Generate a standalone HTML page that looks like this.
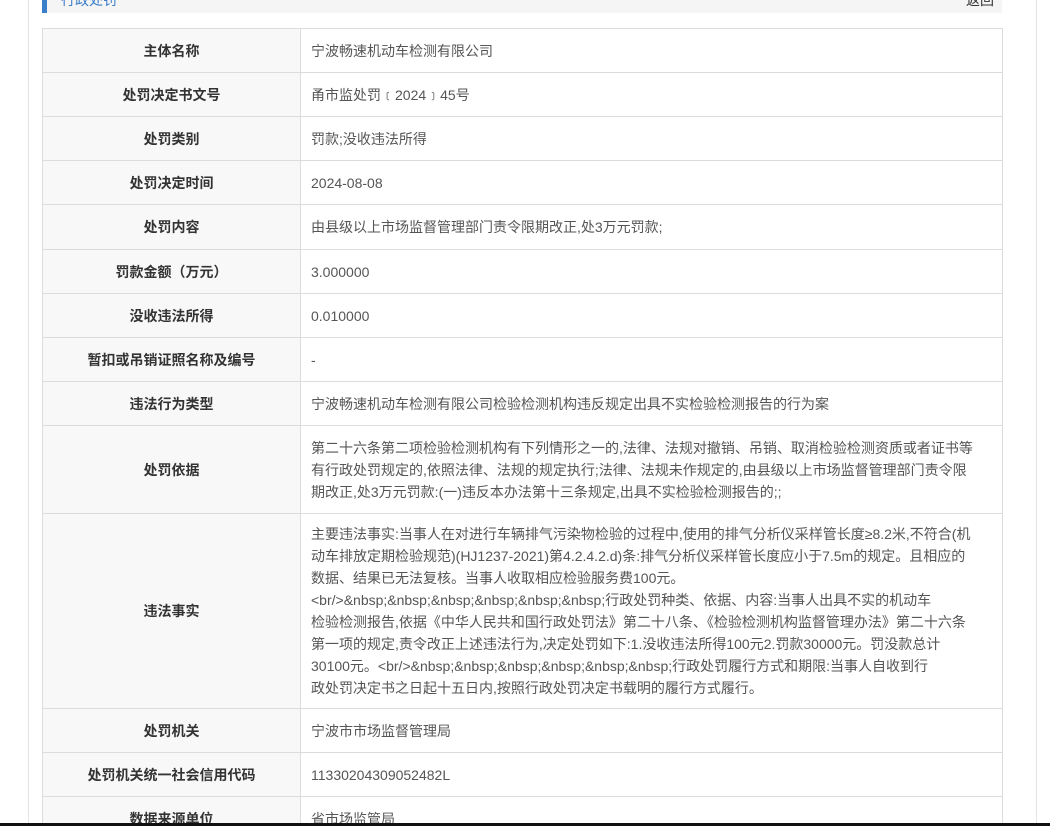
<!DOCTYPE html>
<html><head><meta charset="utf-8"><style>
html,body{margin:0;padding:0;background:#fff;width:1063px;height:826px;overflow:hidden;position:relative}
body{font-family:"Liberation Sans","Noto Sans CJK SC",sans-serif;font-size:14px}
.wrap{position:absolute;left:28px;top:-2px;width:1007px;height:830px;border-left:1px solid #e4e4e4;border-right:1px solid #e4e4e4}
.hd{position:absolute;left:42px;top:0;width:960px;height:13px;background:#f5f5f5;border-left:5px solid #3a7dc9;box-sizing:border-box}
.hd .t{position:absolute;left:14px;top:-10px;color:#3a7dc9;font-size:14px}
.hd .r{position:absolute;right:8px;top:-10px;color:#333;font-size:14px}
table{position:absolute;left:42px;top:28px;width:961px;border-collapse:collapse;table-layout:fixed}
td{border:1px solid #dcdcdc;padding:0 10px;color:#555;line-height:22px;box-sizing:border-box;overflow:hidden}
td.l{width:258px;background:#f8f8f9;text-align:center;font-weight:bold;color:#333;padding:0}
td div{white-space:nowrap}
.bar{position:absolute;left:0;top:823px;width:1050px;height:3px;background:#111}
</style></head><body>
<div class="wrap"></div>
<div class="hd"><span class="t">行政处罚</span><span class="r">返回</span></div>
<table>
<tr style="height:44px"><td class="l">主体名称</td><td>宁波畅速机动车检测有限公司</td></tr>
<tr style="height:44px"><td class="l">处罚决定书文号</td><td>甬市监处罚﹝2024﹞45号</td></tr>
<tr style="height:44px"><td class="l">处罚类别</td><td>罚款;没收违法所得</td></tr>
<tr style="height:44px"><td class="l">处罚决定时间</td><td>2024-08-08</td></tr>
<tr style="height:45px"><td class="l">处罚内容</td><td>由县级以上市场监督管理部门责令限期改正,处3万元罚款;</td></tr>
<tr style="height:44px"><td class="l">罚款金额（万元）</td><td>3.000000</td></tr>
<tr style="height:44px"><td class="l">没收违法所得</td><td>0.010000</td></tr>
<tr style="height:44px"><td class="l">暂扣或吊销证照名称及编号</td><td>-</td></tr>
<tr style="height:44px"><td class="l">违法行为类型</td><td>宁波畅速机动车检测有限公司检验检测机构违反规定出具不实检验检测报告的行为案</td></tr>
<tr style="height:88px"><td class="l">处罚依据</td><td><div>第二十六条第二项检验检测机构有下列情形之一的,法律、法规对撤销、吊销、取消检验检测资质或者证书等</div><div>有行政处罚规定的,依照法律、法规的规定执行;法律、法规未作规定的,由县级以上市场监督管理部门责令限</div><div>期改正,处3万元罚款:(一)违反本办法第十三条规定,出具不实检验检测报告的;;</div></td></tr>
<tr style="height:195px"><td class="l">违法事实</td><td><div>主要违法事实:当事人在对进行车辆排气污染物检验的过程中,使用的排气分析仪采样管长度≥8.2米,不符合(机</div><div>动车排放定期检验规范)(HJ1237-2021)第4.2.4.2.d)条:排气分析仪采样管长度应小于7.5m的规定。且相应的</div><div>数据、结果已无法复核。当事人收取相应检验服务费100元。</div><div>&lt;br/&gt;&amp;nbsp;&amp;nbsp;&amp;nbsp;&amp;nbsp;&amp;nbsp;&amp;nbsp;行政处罚种类、依据、内容:当事人出具不实的机动车</div><div>检验检测报告,依据《中华人民共和国行政处罚法》第二十八条、《检验检测机构监督管理办法》第二十六条</div><div>第一项的规定,责令改正上述违法行为,决定处罚如下:1.没收违法所得100元2.罚款30000元。罚没款总计</div><div>30100元。&lt;br/&gt;&amp;nbsp;&amp;nbsp;&amp;nbsp;&amp;nbsp;&amp;nbsp;&amp;nbsp;行政处罚履行方式和期限:当事人自收到行</div><div>政处罚决定书之日起十五日内,按照行政处罚决定书载明的履行方式履行。</div></td></tr>
<tr style="height:44px"><td class="l">处罚机关</td><td>宁波市市场监督管理局</td></tr>
<tr style="height:44px"><td class="l">处罚机关统一社会信用代码</td><td>11330204309052482L</td></tr>
<tr style="height:44px"><td class="l">数据来源单位</td><td>省市场监管局</td></tr>
</table>
<div class="bar"></div>
</body></html>
